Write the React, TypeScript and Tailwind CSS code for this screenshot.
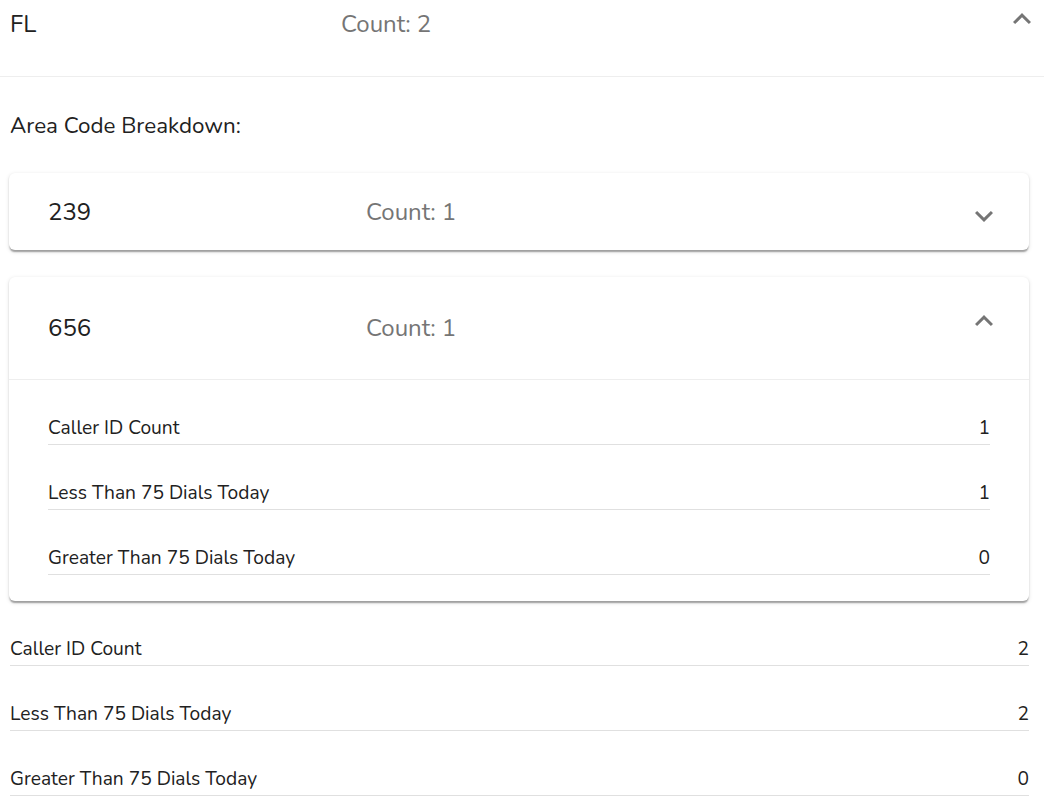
import React from 'react';

const font = { fontFamily: '"Nunito", "Lato", "Noto Sans", sans-serif' };

function Chevron({ up = false }: { up?: boolean }) {
  return (
    <svg viewBox="0 0 24 24" className={`h-[36px] w-[36px] shrink-0 fill-[#757575] ${up ? 'rotate-180' : ''}`}>
      <path d="M16.59 8.59 12 13.17 7.41 8.59 6 10l6 6 6-6z" />
    </svg>
  );
}

function StatRow({ label, value }: { label: string; value: number }) {
  return (
    <div className="flex items-center justify-between border-b border-[#e0e0e0] pt-[36px] pb-[4px] text-[19.2px] leading-[24px] text-[#212121]">
      <span>{label}</span>
      <span>{value}</span>
    </div>
  );
}

interface AreaCode {
  code: string;
  count: number;
  open: boolean;
  stats?: { label: string; value: number }[];
}

const areaCodes: AreaCode[] = [
  { code: '239', count: 1, open: false },
  {
    code: '656',
    count: 1,
    open: true,
    stats: [
      { label: 'Caller ID Count', value: 1 },
      { label: 'Less Than 75 Dials Today', value: 1 },
      { label: 'Greater Than 75 Dials Today', value: 0 },
    ],
  },
];

function AreaCard({ item }: { item: AreaCode }) {
  const shadow =
    'shadow-[0_3px_1.5px_-1.5px_rgba(0,0,0,0.2),0_1.5px_1.5px_0_rgba(0,0,0,0.14),0_1.5px_4.5px_0_rgba(0,0,0,0.12)]';

  if (!item.open) {
    return (
      <div className={`rounded-[6px] bg-white ${shadow}`}>
        <div className="flex h-[77px] items-start pl-[39px] pr-[27px] pt-[21px] text-[24px] leading-[36px]">
          <span className="w-[318px] text-[#212121]">{item.code}</span>
          <span className="flex-1 text-[#757575]">Count: {item.count}</span>
          <div className="mt-[4px]">
            <Chevron />
          </div>
        </div>
      </div>
    );
  }

  return (
    <div className={`rounded-[6px] bg-white ${shadow}`}>
      <div className="flex items-start border-b border-[#eeeeee] pl-[39px] pr-[27px] pt-[26px] pb-[33px] text-[24px] leading-[36px]">
        <span className="mt-[7px] w-[318px] text-[#212121]">{item.code}</span>
        <span className="mt-[7px] flex-1 text-[#757575]">Count: {item.count}</span>
        <Chevron up />
      </div>
      <div className="px-[39px] pb-[26px]">
        {item.stats?.map((s) => (
          <StatRow key={s.label} label={s.label} value={s.value} />
        ))}
      </div>
    </div>
  );
}

export default function App() {
  return (
    <div className="min-h-[810px] w-full bg-white" style={font}>
      {/* state header */}
      <div className="flex items-start border-b border-[#eeeeee] pl-[10px] pr-[4px] pt-[1px] pb-[34px] text-[24px] leading-[36px]">
        <span className="mt-[5px] w-[331px] text-[#212121]">FL</span>
        <span className="mt-[5px] flex-1 text-[#757575]">Count: 2</span>
        <Chevron up />
      </div>

      <div className="pl-[9px] pr-[15px]">
        <div className="mt-[31px] pl-[1px] text-[22.4px] leading-[36px] text-[#212121]">Area Code Breakdown:</div>

        <div className="mt-[29px] flex flex-col gap-[27px]">
          {areaCodes.map((a) => (
            <AreaCard key={a.code} item={a} />
          ))}
        </div>

        <div className="pl-[1px]">
          <StatRow label="Caller ID Count" value={2} />
          <StatRow label="Less Than 75 Dials Today" value={2} />
          <StatRow label="Greater Than 75 Dials Today" value={0} />
        </div>
      </div>
    </div>
  );
}
